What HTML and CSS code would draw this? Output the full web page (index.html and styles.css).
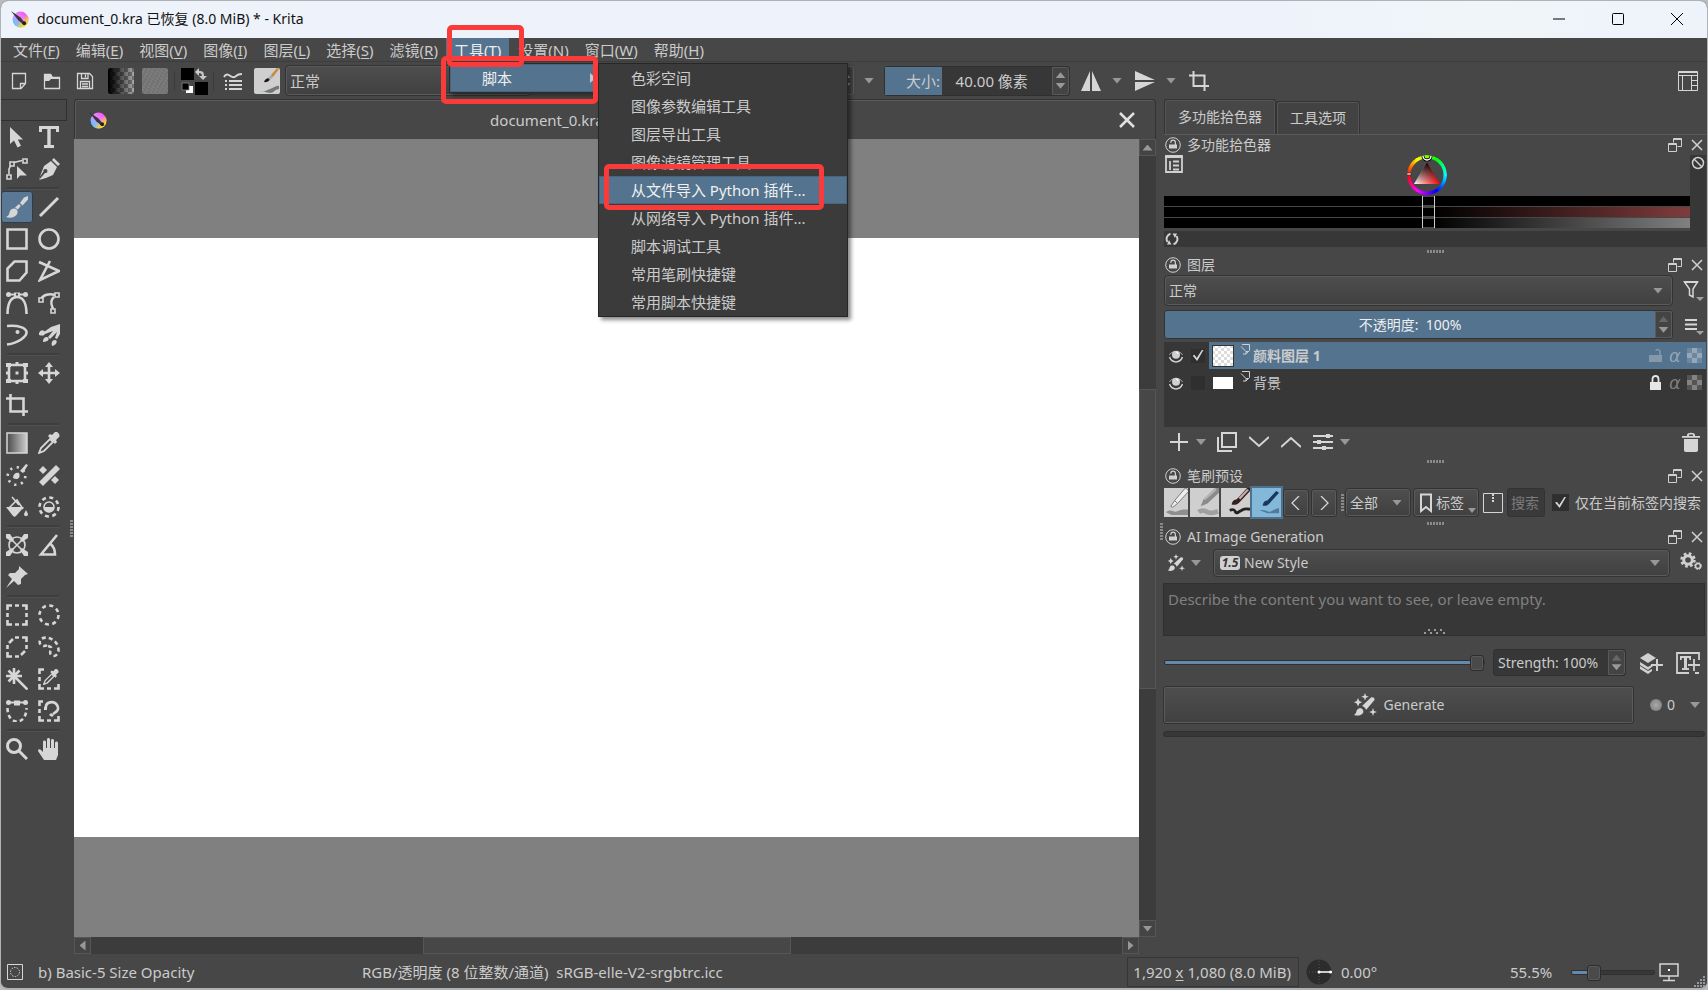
FILE: index.html
```html
<!DOCTYPE html>
<html lang="zh-CN">
<head>
<meta charset="utf-8">
<title>document_0.kra 已恢复 (8.0 MiB) * - Krita</title>
<link rel="stylesheet" href="styles.css">
</head>
<body>
<svg class="sprite" aria-hidden="true">
  <defs>
    <linearGradient id="gk1" x1="1" y1="0" x2="0" y2="1"><stop offset="0" stop-color="#ff3df2"/><stop offset=".5" stop-color="#e78cff"/><stop offset="1" stop-color="#19e3ff"/></linearGradient>
    <linearGradient id="gk2" x1="0" y1="0" x2="1" y2="1"><stop offset=".5" stop-color="#ffe600" stop-opacity="0"/><stop offset=".85" stop-color="#ffe600"/></linearGradient>
    <linearGradient id="gfade"><stop offset="0" stop-color="#4a4a4a"/><stop offset="1" stop-color="#cfcfcf"/></linearGradient>
    <linearGradient id="gblack"><stop offset="0" stop-color="#000"/><stop offset=".2" stop-color="#000" stop-opacity=".85"/><stop offset="1" stop-color="#000" stop-opacity="0"/></linearGradient>
    <linearGradient id="gtri1"><stop offset="0" stop-color="#fff"/><stop offset="1" stop-color="#f00"/></linearGradient>
    <linearGradient id="gtri2" x1="0" y1="0" x2="0" y2="1"><stop offset="0" stop-color="#000"/><stop offset="1" stop-color="#000" stop-opacity="0"/></linearGradient>
    <pattern id="pcheck" width="8" height="8" patternUnits="userSpaceOnUse"><rect width="8" height="8" fill="#a8a8a8"/><path d="M0 0h4v4H0zM4 4h4v4H4z" fill="#727272"/></pattern>
    <pattern id="plight" width="6" height="6" patternUnits="userSpaceOnUse"><rect width="6" height="6" fill="#fff"/><path d="M0 0h3v3H0zM3 3h3v3H3z" fill="#dcdcdc"/></pattern>
  </defs>
  <symbol id="krita" viewBox="0 0 17 17"><circle cx="9" cy="9" r="7.500" fill="url(#gk1)"/><circle cx="9" cy="9" r="7.500" fill="url(#gk2)"/><path d="M0 1l9 6 4 5-1.500 1.500L7 10z" fill="#3b3540"/><circle cx="12.500" cy="12.500" r="1.800" fill="#222"/></symbol>
  <symbol id="lock" viewBox="0 0 16 16"><circle cx="8" cy="8" r="7.300" fill="none" stroke="#d0d0d0"/><path d="M4 7.500h8v4H4z" fill="#d0d0d0"/><path d="M5.800 5.800V5.500a2.300 2.300 0 0 1 4.600 0V8" fill="none" stroke="#d0d0d0" stroke-width="1.200"/></symbol>
  <symbol id="float" viewBox="0 0 14 14"><path d="M5.500 4.500v-4h8v8h-4M5 1.500h9M.5 5.500h8v8h-8zM0 6.500h9" fill="none" stroke="#d0d0d0"/></symbol>
  <symbol id="close" viewBox="0 0 12 12"><path d="M1 1l10 10M11 1L1 11" fill="none" stroke="#d0d0d0" stroke-width="1.500"/></symbol>
  <symbol id="brush" viewBox="0 0 22 22"><path d="M0 21c3-1 3-3 4-6 1-2.500 5-3.500 7-1 1.500 2.500 0 5-2.500 6.500C6 22 2.500 22 0 21zM9 11.500l4-3.500 1.800 2-3 3.500zM14 7l4-5.500 4-1.500v3.500L16.500 9.500z" fill="#d6d6d6"/></symbol>
  <symbol id="picker" viewBox="0 0 22 22"><path d="M1 21l2-5L12 7l3 3-9 9z" fill="none" stroke="#d6d6d6" stroke-width="1.800"/><path d="M10 4l2-2 2 1 3-3c2-1 5 2 4.500 4.500l-3.500 3.500 1 2-2 2z" fill="#d6d6d6"/></symbol>
  <symbol id="wand" viewBox="0 0 24 24"><path d="M1 22c2-1 2-3 3-5 1.500-2.500 5-2 6 0s0 4-2.500 5c-2 .800-4.500.600-6.500 0zM9 13l9-8.500c2-1 4 .500 3.500 2.500L13 17c-.500-2-2-3.500-4-4zM12 0l1 2.800 2.800 1-2.800 1L12 7.500l-1-2.700-2.800-1 2.800-1zM5 5l1.300 3L9 9.300l-2.700 1.200L5 13.500l-1.200-3L1 9.300 3.800 8zM20 15l1 3 3 1-3 1-1 3-1-3-3-1 3-1z" fill="#d6d6d6"/></symbol>
  <symbol id="node" viewBox="0 0 10 11"><path d="M2 .5h7.500v6l-3.500 3.500H3M1 2.500l5 5M6 10V7.500h3" fill="none" stroke="#d0d0d0"/></symbol>
  <symbol id="eye" viewBox="0 0 14 14"><path d="M.5 6C2 1.500 12 1.500 13.500 6" fill="none" stroke="#aaa"/><path d="M.5 8C3 14.500 11 14.500 13.500 8" fill="none" stroke="#d0d0d0" stroke-width="1.500"/><circle cx="7" cy="5.800" r="4" fill="#d0d0d0"/><path d="M7 3a2 2 0 0 1 2 2" stroke="#fff" fill="none"/></symbol>
  <symbol id="checks" viewBox="0 0 15 15"><path d="M0 0h5v5H0zM10 0h5v5h-5zM5 5h5v5H5zM0 10h5v5H0zM10 10h5v5h-5z" fill="#fff" opacity=".15"/><path d="M5 0h5v5H5zM0 5h5v5H0zM10 5h5v5h-5zM5 10h5v5H5z" fill="#fff" opacity=".38"/></symbol>
</svg>

<div class="window">
  <header class="titlebar">
    <svg class="i18"><use href="#krita"/></svg>
    <h1 class="title">document_0.kra 已恢复 (8.0 MiB) * - Krita</h1>
    <div class="winbtns">
      <button class="winbtn" aria-label="最小化"><svg class="i12" viewBox="0 0 12 12"><path d="M0 6h12" stroke="#000"/></svg></button>
      <button class="winbtn" aria-label="最大化"><svg class="i12" viewBox="0 0 12 12"><rect x=".5" y=".5" width="11" height="11" rx="1" fill="none" stroke="#000"/></svg></button>
      <button class="winbtn" aria-label="关闭"><svg class="i12" viewBox="0 0 12 12"><path d="M0 0l12 12M12 0L0 12" stroke="#000"/></svg></button>
    </div>
  </header>

  <nav class="menubar">
    <button class="menu">文件(<u>F</u>)</button>
    <button class="menu">编辑(<u>E</u>)</button>
    <button class="menu">视图(<u>V</u>)</button>
    <button class="menu">图像(<u>I</u>)</button>
    <button class="menu">图层(<u>L</u>)</button>
    <button class="menu">选择(<u>S</u>)</button>
    <button class="menu">滤镜(<u>R</u>)</button>
    <div class="menuwrap">
      <button class="menu open">工具(<u>T</u>)</button>
      <div class="popup">
        <button class="popitem on">脚本<span class="subarrow"></span></button>
        <div class="submenu">
          <button class="popitem">色彩空间</button>
          <button class="popitem">图像参数编辑工具</button>
          <button class="popitem">图层导出工具</button>
          <button class="popitem">图像滤镜管理工具</button>
          <button class="popitem on">从文件导入 Python 插件...</button>
          <button class="popitem">从网络导入 Python 插件...</button>
          <button class="popitem">脚本调试工具</button>
          <button class="popitem">常用笔刷快捷键</button>
          <button class="popitem">常用脚本快捷键</button>
        </div>
      </div>
    </div>
    <button class="menu">设置(<u>N</u>)</button>
    <button class="menu">窗口(<u>W</u>)</button>
    <button class="menu">帮助(<u>H</u>)</button>
  </nav>

  <div class="toolbar">
    <div class="filebtns">
      <button class="btn" aria-label="新建"><svg class="i18" viewBox="0 0 18 18"><path d="M2.500 1.500h13v10l-4.500 5h-8.500zM10.500 16v-4.500H15" fill="none" stroke="#d6d6d6" stroke-width="1.300"/></svg></button>
      <button class="btn" aria-label="打开"><svg class="i18" viewBox="0 0 18 18"><path d="M1.500 16.500v-14h6l2 3h7v11z" fill="none" stroke="#d6d6d6" stroke-width="1.300"/><path d="M1 2h7l1.500 3H17v2H8L6 9H1z" fill="#d6d6d6"/></svg></button>
      <button class="btn" aria-label="保存"><svg class="i18" viewBox="0 0 18 18"><path d="M1.500 1.500h12l3 3v12h-15zM4.500 16V9.500h9V16M5.500 2v4.500h6.500V2M9.500 2.500v3M6 12h6M6 14.500h6" fill="none" stroke="#d6d6d6" stroke-width="1.300"/></svg></button>
    </div>
    <button class="btn" aria-label="渐变"><svg class="i26" viewBox="0 0 26 26"><rect width="26" height="26" rx="2" fill="url(#pcheck)"/><rect width="26" height="26" rx="2" fill="url(#gblack)"/></svg></button>
    <button class="btn texture" aria-label="图案"></button>
    <i class="vsep"></i>
    <button class="btn" aria-label="前景色和背景色"><svg class="i26" viewBox="0 0 26 26"><path d="M0 0h13v12H0zM14 14h13v13H14z" fill="#000"/><path d="M5 18h7v7H5z" fill="#fff"/><path d="M1 15h7v7H1z" fill="#000" stroke="#888" stroke-width=".8"/><path d="M14 4l4-4v3c4 0 5 1 5 5h3l-4 4-4-4h3c0-2-1-3-3-3v3z" fill="#c8c8c8"/></svg></button>
    <i class="vsep"></i>
    <button class="btn" aria-label="笔刷编辑器"><svg class="i20" viewBox="0 0 20 20"><path d="M1 6c4-7 8 4 12-1 2-2 3-2 6-2" fill="none" stroke="#d6d6d6" stroke-width="2"/><path d="M2 10h2M6 10h13M2 14h2M6 14h13M2 18h2M6 18h13" stroke="#d6d6d6" stroke-width="2"/></svg></button>
    <button class="btn" aria-label="笔刷预设"><svg class="i26" viewBox="0 0 26 26"><rect width="26" height="26" rx="2" fill="#cfcfcf"/><path d="M6 23c5 2 6-1 10-2s6-4 9-3v3c-4 0-5 4-9 4z" fill="#777"/><path d="M10 14c1-3 3-4 5-4l1 1.500c-1 2-4 3-6 2.500z" fill="#2b1512"/><path d="M14 10l3-3 2 2-3 3z" fill="#aaa"/><path d="M17 7l6-7 2 1-6 8z" fill="#c98a3c"/></svg></button>
    <label class="combo blend"><select aria-label="混合模式"><option>正常</option></select></label>
    <span class="spin hiddenspin"><i class="up"></i><i class="dn"></i></span>
    <i class="dd"></i>
    <div class="sizebox"><div class="sizefill" style="width:31%"></div><input class="sizeinput" aria-label="大小" value="大小:&nbsp;&nbsp;&nbsp;&nbsp;40.00 像素"><span class="spin"><i class="up"></i><i class="dn"></i></span></div>
    <button class="btn" aria-label="水平镜像"><svg class="i20" viewBox="0 0 20 20"><path d="M9 0v20H0zM11 0v20h9z" fill="#d6d6d6"/></svg></button>
    <i class="dd"></i>
    <button class="btn" aria-label="垂直镜像"><svg class="i20" viewBox="0 0 20 20"><path d="M0 0v9h20zM0 11v9l20-9z" fill="#d6d6d6"/></svg></button>
    <i class="dd"></i>
    <button class="btn" aria-label="环绕模式"><svg class="i20" viewBox="0 0 20 20"><path d="M4.500 0v15H20M0 4.500h15.500V20" fill="none" stroke="#d6d6d6" stroke-width="2"/></svg></button>
    <button class="btn last" aria-label="工作区"><svg class="i20" viewBox="0 0 20 20"><path d="M.5.5h19v19H.5zM0 1.500h20M0 4.500h20M4.500 4v16M13.500 4v16M13.500 9.500H20M13.500 14.500H20" fill="none" stroke="#d6d6d6"/></svg></button>
  </div>

  <main class="main">
    <aside class="toolbox">
      <div class="toolhead"></div>
      <div class="group">
        <button class="tool" aria-label="选择形状"><svg viewBox="0 0 22 22"><path class="f" d="M4 1v17l4-3.500 3.500 7 3.500-1.800-3.200-6.200H17z"/></svg></button>
        <button class="tool" aria-label="文本"><svg viewBox="0 0 22 22"><path class="f" d="M1 0h20v6h-3V3h-5.300v16H16v3H6v-3h3.300V3H4v3H1z"/></svg></button>
        <button class="tool" aria-label="编辑形状"><svg viewBox="0 0 22 22"><path class="s" d="M3 16v-5l2-4M8 4.500l8-2M1 17h4v4H1zM4 4h4v4H4zM17 1h4v4h-4z"/><path class="f" d="M11 8v13l3-3.500H21z"/></svg></button>
        <button class="tool" aria-label="书法"><svg viewBox="0 0 22 22"><path class="f" d="M1 21L6 8l7-5 6 6-4 8-7 3-7 2 6-7a2 2 0 1 0-1.500-1.500L1 20zM14 2l1.800-2L22 6l-2 2z"/></svg></button>
      </div>
      <div class="group">
        <button class="tool sel" aria-label="笔刷"><svg><use href="#brush"/></svg></button>
        <button class="tool" aria-label="直线"><svg viewBox="0 0 22 22"><path class="s3" d="M2 20L20 2"/></svg></button>
        <button class="tool" aria-label="矩形"><svg viewBox="0 0 22 22"><path class="s2" d="M1.500 1.500h19v19h-19z"/></svg></button>
        <button class="tool" aria-label="椭圆"><svg viewBox="0 0 22 22"><circle class="s2" cx="11" cy="11" r="9.500"/></svg></button>
        <button class="tool" aria-label="多边形"><svg viewBox="0 0 22 22"><path class="s2" d="M8.500 1.500h12v11l-7 8h-12v-12z"/></svg></button>
        <button class="tool" aria-label="折线"><svg viewBox="0 0 22 22"><path class="s2" d="M1 2l20 9L2 20 12 1"/></svg></button>
        <button class="tool" aria-label="贝塞尔曲线"><svg viewBox="0 0 22 22"><path class="s2" d="M1.500 22C1.500 8 7 5 11 5s9.500 3 9.500 17"/><path class="f" d="M3 1.500h5v-1h6v1h5v2h-5v2H8v-2H3z"/><circle class="f" cx="2.500" cy="2.500" r="2.500"/><circle class="f" cx="19.500" cy="2.500" r="2.500"/><path d="M10 1.500h2v2h-2z" fill="#474747"/></svg></button>
        <button class="tool" aria-label="手绘路径"><svg viewBox="0 0 22 22"><path class="s2" d="M3 7c2-4 8-6 14-4M16 5c-5 4-2 9-1 12"/><path class="s k" d="M1 6h4v4H1zM17 1h4v4h-4zM13 17h4v4h-4z"/></svg></button>
        <button class="tool" aria-label="动态笔刷"><svg viewBox="0 0 22 22"><path class="s2" d="M1 2c12-1 19 2 19.500 6S13 19 1 20.500"/><circle class="f" cx="11.500" cy="8" r="2"/></svg></button>
        <button class="tool" aria-label="多路笔刷"><svg viewBox="0 0 22 22"><path class="f" d="M22 0v10l-3 5-2-1 2-6-7 7-2-2 5-6-8 3-1-2 7-5zM1 9c2-4 6-3 6 0s-3 3-6 2zM5 18c0-4 2-5 4-5 3 1 2 5-4 5zM14 22c-1-3 0-6 3-6s2 5-3 6z"/></svg></button>
      </div>
      <div class="group">
        <button class="tool" aria-label="变形"><svg viewBox="0 0 22 22"><path class="s2" d="M3 3h16v16H3z"/><path class="f" d="M0 1h5v4H0zM17 1h5v4h-5zM0 17h5v4H0zM17 17h5v4h-5zM9.500 0h3v4h-3zM9.500 18h3v4h-3zM0 9.500h4v3H0zM18 9.500h4v3h-4zM9.500 9.500h3v3h-3z"/></svg></button>
        <button class="tool" aria-label="移动"><svg viewBox="0 0 22 22"><path class="s2" d="M11 3v16M3 11h16"/><path class="f" d="M11 0l4 5H7zM11 22l4-5H7zM0 11l5-4v8zM22 11l-5-4v8z"/></svg></button>
        <button class="tool" aria-label="裁剪"><svg viewBox="0 0 22 22"><path class="s2" d="M4.500 0v17.500H22M0 4.500h17.500V22"/></svg></button>
      </div>
      <div class="group">
        <button class="tool" aria-label="渐变"><svg viewBox="0 0 22 22"><rect x="1" y="1" width="20" height="20" fill="url(#gfade)" stroke="#d6d6d6" stroke-width="1.500"/></svg></button>
        <button class="tool" aria-label="拾色器"><svg><use href="#picker"/></svg></button>
        <button class="tool" aria-label="智能填色"><svg viewBox="0 0 22 22"><path class="f" d="M7 14c0-4 3-6 6-5 2 4-1 8-6 5zM14 7l6-7 2 1-5 8z"/><circle class="s2" cx="10.500" cy="12" r="8.800" stroke-dasharray="2.300 4.600"/></svg></button>
        <button class="tool" aria-label="智能补丁"><svg viewBox="0 0 22 22"><path class="f" d="M1 18L18 1l4 4L5 22zM1 6l4-4 4 4-4 4zM13 16l4-4 4 4-4 4z"/></svg></button>
        <button class="tool" aria-label="填充"><svg viewBox="0 0 22 22"><path class="s" d="M3 12l8-8 6 9M6 1l7 8"/><path class="f" d="M0 11h18l-8 9c-1 1-2 1-3 0zM18 18l2-4 2 4c0 3-4 3-4 0z"/></svg></button>
        <button class="tool" aria-label="包围填充"><svg viewBox="0 0 22 22"><circle class="s2" cx="11" cy="11" r="9.500" stroke-dasharray="4 3.460"/><circle class="s" cx="11" cy="11" r="5"/><path class="f" d="M6 11h10c0 7-10 7-10 0z"/></svg></button>
      </div>
      <div class="group">
        <button class="tool" aria-label="辅助尺"><svg viewBox="0 0 22 22"><path class="s" d="M1 1l20 20M21 1L1 21"/><circle class="s" cx="11" cy="11" r="8"/><path class="f" d="M0 0h4l4 6-2 2-6-4zM22 0h-4l-4 6 2 2 6-4zM0 22h4l4-6-2-2-6 4zM22 22h-4l-4-6 2-2 6 4z"/></svg></button>
        <button class="tool" aria-label="测量"><svg viewBox="0 0 22 22"><path class="s2" d="M19 1L3 20.500h14c0-5-1-8-5-11"/></svg></button>
        <button class="tool" aria-label="参考图像"><svg viewBox="0 0 22 22"><path class="f" d="M13 0l9 8-3 1-4 4v5l-3 1-4-4-8 7 6-9-4-4 2-2h5l4-4z"/></svg></button>
      </div>
      <div class="group">
        <button class="tool" aria-label="矩形选区"><svg viewBox="0 0 22 22"><path class="s2" d="M1.500 6V1.500H6M9 1.500h4M16 1.500h4.500V6M20.500 9v4M20.500 16v4.500H16M13 20.500H9M6 20.500H1.500V16M1.500 13V9"/></svg></button>
        <button class="tool" aria-label="椭圆选区"><svg viewBox="0 0 22 22"><circle class="s2" cx="11" cy="11" r="9.500" stroke-dasharray="4 3.460"/></svg></button>
        <button class="tool" aria-label="多边形选区"><svg viewBox="0 0 22 22"><path class="s2" d="M9 1.500h4M16 1.500h4.500V6M20.500 9v4M19 15l-4 4M13 20.500H9M6 20.500H1.500V16M1.500 13V9M3 7l4-4"/></svg></button>
        <button class="tool" aria-label="手绘选区"><svg viewBox="0 0 22 22"><path class="s2" stroke-dasharray="4 3" d="M9 9c-4 3-10-1-6-6 6-4 18 1 17.500 12-2 8-10 5-8 0 3-4-1-5-4-5"/></svg></button>
        <button class="tool" aria-label="相似选区"><svg viewBox="0 0 22 22"><path class="s2" d="M8 0v16M0 8h16M2.500 2.500l19 19M13.500 2.500l-11 11"/></svg></button>
        <button class="tool" aria-label="取色选区"><svg viewBox="0 0 22 22"><path class="s2" d="M1.500 6V1.500H6M1.500 13V9M6 20.500H1.500V16M9 20.500h4M16 20.500h4.500V16"/><use href="#picker" x="5" y="1" width="16" height="16"/></svg></button>
        <button class="tool" aria-label="贝塞尔选区"><svg viewBox="0 0 22 22"><path class="f" d="M3 1.500h5v-1h6v1h5v2h-5v2H8v-2H3z"/><circle class="f" cx="2.500" cy="2.500" r="2.500"/><circle class="f" cx="19.500" cy="2.500" r="2.500"/><path class="s2" stroke-dasharray="4 3" d="M1.500 8c0 18 19 18 19 0"/></svg></button>
        <button class="tool" aria-label="磁性选区"><svg viewBox="0 0 22 22"><path class="s2" d="M1.500 6V1.500H5M1.500 13V9M6 20.500H1.500V16M9 20.500h4M16 20.500h4.500V16M8 8c-1-6 8-8 11-3s-1 7-4 9"/><path class="f" d="M6 7l3-1v4H6zM13 13l3 2-2 2-3-2z"/></svg></button>
      </div>
      <div class="group">
        <button class="tool" aria-label="缩放"><svg viewBox="0 0 22 22"><circle class="s3" cx="8" cy="8" r="6.500"/><path class="s3" d="M13 13l8 8"/></svg></button>
        <button class="tool" aria-label="平移"><svg viewBox="0 0 22 22"><path class="f" d="M6 22L0 13c0-2 2-2 3-1l2 2V4c0-2 3-2 3 0v6h1V1.500c0-2 3-2 3 0V10h1V2.500c0-2 3-2 3 0V10h1V5c0-2 3-2 3 0v12l-2 5z"/></svg></button>
      </div>
      <div class="vgrip leftgrip"></div>
    </aside>

    <section class="center">
      <div class="doctab">
        <svg class="i18"><use href="#krita"/></svg>
        <span class="docname">document_0.kra 已恢复 (8.0 MiB) *</span>
        <button class="btn" aria-label="关闭文档"><svg class="i16" viewBox="0 0 16 16"><path d="M1 1l14 14M15 1L1 15" stroke="#e0e0e0" stroke-width="2.500"/></svg></button>
      </div>
      <div class="view">
        <div class="canvas"><div class="page"></div></div>
        <div class="vbar"><button class="sb" aria-label="上"><i class="up"></i></button><div class="vtrack"><div class="vthumb"></div></div><button class="sb" aria-label="下"><i class="dn"></i></button></div>
        <div class="hbar"><button class="sb" aria-label="左"><i class="lf"></i></button><div class="htrack"><div class="hthumb"></div></div><button class="sb" aria-label="右"><i class="rt"></i></button></div>
      </div>
    </section>

    <aside class="docks">
      <div class="vgrip dockgrip"></div>
      <div class="tabs"><button class="tab active">多功能拾色器</button><button class="tab">工具选项</button></div>

      <section class="dock">
        <div class="dtitle"><svg class="i16"><use href="#lock"/></svg><h2>多功能拾色器</h2><svg class="i14"><use href="#float"/></svg><svg class="i12"><use href="#close"/></svg></div>
        <div class="picker">
          <div class="pickmain">
            <div class="wheelrow">
              <button class="btn" aria-label="设置"><svg class="i18" viewBox="0 0 18 18"><path d="M1 1h16v16H1zM0 2h18M5 6v9M8 6.500h6M8 10.500h6M8 14.500h6" fill="none" stroke="#d0d0d0" stroke-width="1.800"/></svg></button>
              <div class="wheel"><div class="ring"></div><svg class="tri" viewBox="0 0 40 40"><path d="M20 7l13 22H7z" fill="url(#gtri1)"/><path d="M20 7l13 22H7z" fill="url(#gtri2)"/><path d="M16 1a4 4 0 1 0 8 0" fill="none" stroke="#000" stroke-width="3"/><path d="M16 1a4 4 0 1 0 8 0" fill="none" stroke="#fff" stroke-width="1.500"/><path d="M0 18h4v2H0z" fill="#ddd" stroke="#222" stroke-width=".5"/></svg></div>
            </div>
            <div class="bars"><div class="cbar"></div><div class="cbar red"></div><div class="cbar gray"></div></div>
            <div class="refresh"><svg class="i14" viewBox="0 0 14 14"><path d="M5.500 1.700A5.500 5.500 0 0 0 2.500 10M8.500 12.300A5.500 5.500 0 0 0 11.500 4" fill="none" stroke="#d0d0d0" stroke-width="2"/><path d="M2 12.500h4.500L4 8zM12 1.500H7.500L10 6z" fill="#d0d0d0"/></svg></div>
          </div>
          <div class="pickside"><svg class="i14" viewBox="0 0 14 14"><circle cx="7" cy="7" r="5.500" fill="none" stroke="#d0d0d0" stroke-width="1.500"/><path d="M3 3l8 8" stroke="#d0d0d0" stroke-width="1.500"/></svg></div>
        </div>
      </section>
      <div class="hgrip tight"></div>

      <section class="dock">
        <div class="dtitle"><svg class="i16"><use href="#lock"/></svg><h2>图层</h2><svg class="i14"><use href="#float"/></svg><svg class="i12"><use href="#close"/></svg></div>
        <div class="lrow"><label class="combo grow tall"><select aria-label="图层混合模式"><option>正常</option></select></label><button class="btn side" aria-label="筛选"><svg class="i22" viewBox="0 0 22 22"><path d="M1.500 2h13L10 9v8l-3.500-2V9z" fill="none" stroke="#d6d6d6" stroke-width="1.500"/><path d="M1 2h14" stroke="#d6d6d6" stroke-width="2"/><path d="M13 17h8l-4 4z" fill="#a0a0a0"/></svg></button></div>
        <div class="lrow"><div class="opacity"><span>不透明度:&nbsp; 100%</span><span class="spin"><i class="up dim"></i><i class="dn"></i></span></div><button class="btn side" aria-label="图层菜单"><svg class="i22" viewBox="0 0 22 22"><path d="M2 6h12M2 10.500h12M2 15h12" stroke="#d6d6d6" stroke-width="2"/><path d="M13 17h8l-4 4z" fill="#a0a0a0"/></svg></button></div>
        <div class="layers">
          <div class="layer">
            <svg class="i14"><use href="#eye"/></svg>
            <input class="tick small" type="checkbox" checked aria-label="选中颜料图层 1">
            <div class="lbody on"><svg class="thumb" viewBox="0 0 22 22"><rect x=".5" y=".5" width="21" height="21" fill="url(#plight)" stroke="#333"/></svg><svg class="mini"><use href="#node"/></svg><span class="lname">颜料图层 1</span>
              <svg class="i15 fade" viewBox="0 0 15 15"><path d="M1 7h13v7H1z" fill="#d0d0d0"/><path d="M12 8V4c0-3-4-3-4-1" fill="none" stroke="#d0d0d0" stroke-width="1.500"/></svg><i class="alpha">α</i><svg class="i15"><use href="#checks"/></svg></div>
          </div>
          <div class="layer">
            <svg class="i14"><use href="#eye"/></svg>
            <input class="tick small" type="checkbox" aria-label="选中背景">
            <div class="lbody"><svg class="thumb" viewBox="0 0 22 22"><path d="M1 5h20v12H1z" fill="#fff"/></svg><svg class="mini"><use href="#node"/></svg><span class="lname">背景</span>
              <svg class="i15" viewBox="0 0 15 15"><path d="M2 7h11v8H2z" fill="#e6e6e6"/><path d="M4.500 8V4c0-4 6-4 6 0v4" fill="none" stroke="#e6e6e6" stroke-width="1.800"/></svg><i class="alpha">α</i><svg class="i15"><use href="#checks"/></svg></div>
          </div>
        </div>
        <div class="lactions">
          <button class="btn" aria-label="添加图层"><svg class="i20" viewBox="0 0 20 20"><path d="M10 1v18M1 10h18" stroke="#d6d6d6" stroke-width="2"/></svg></button><i class="dd"></i>
          <button class="btn" aria-label="复制图层"><svg class="i20" viewBox="0 0 20 20"><path d="M5 1h14v14H5zM1 5v14h14" fill="none" stroke="#d6d6d6" stroke-width="2"/></svg></button>
          <button class="btn" aria-label="下移"><svg class="i20" viewBox="0 0 20 20"><path d="M0 5l10 9 10-9" fill="none" stroke="#d6d6d6" stroke-width="2"/></svg></button>
          <button class="btn" aria-label="上移"><svg class="i20" viewBox="0 0 20 20"><path d="M0 15l10-9 10 9" fill="none" stroke="#d6d6d6" stroke-width="2"/></svg></button>
          <button class="btn" aria-label="图层属性"><svg class="i20" viewBox="0 0 20 20"><path d="M0 4h20M0 10h20M0 16h20" stroke="#d6d6d6" stroke-width="2"/><path d="M13 2h4v4h-4zM4 8h4v4H4zM9 14h4v4H9z" fill="#d6d6d6"/></svg></button><i class="dd"></i>
          <button class="btn last" aria-label="删除图层"><svg class="i20" viewBox="0 0 20 20"><path d="M3 7h14v11c0 1-.500 2-2 2H5c-1.500 0-2-1-2-2zM1 4h18v1.800H1zM6 3c0-3 8-3 8 0v1h-2V2.500H8V4H6z" fill="#d6d6d6"/></svg></button>
        </div>
      </section>
      <div class="hgrip"></div>

      <section class="dock">
        <div class="dtitle"><svg class="i16"><use href="#lock"/></svg><h2>笔刷预设</h2><svg class="i14"><use href="#float"/></svg><svg class="i12"><use href="#close"/></svg></div>
        <div class="presets">
          <button class="preset" aria-label="橡皮擦"><svg viewBox="0 0 30 30"><path d="M2 25c7-4 7 1 12-1s8-2 16-1v5H8z" fill="#8e8e8e"/><path d="M7 19l4-6L22 0l4 3-12 13-5 4z" fill="#ededed" stroke="#777"/><path d="M11 13l3 3" stroke="#777"/></svg></button>
          <button class="preset" aria-label="铅笔"><svg viewBox="0 0 30 30"><path d="M9 25c8-6 6 5 20-1" fill="none" stroke="#a0a0a0" stroke-width="5"/><path d="M11 19l3-7L26 0h4v5L18 16z" fill="#8a8a8a"/><path d="M15 12L27 1" stroke="#b5b5b5" stroke-width="2"/></svg></button>
          <button class="preset" aria-label="墨水"><svg viewBox="0 0 30 30"><path d="M9 23c8-3 4 5 9 2s6-4 12-3" fill="none" stroke="#222" stroke-width="3"/><path d="M11 17c1-4 3-5 5-5L27 0h3v3L19 15c-2 2-5 3-8 2z" fill="#35201f"/><path d="M18 10l9-9 2 1-9 10z" fill="#bfa9a9"/></svg></button>
          <button class="preset blue" aria-label="b) Basic-5 Size Opacity"><svg viewBox="0 0 30 30"><path d="M8 23c7-1 8 3 12 1s5-3 8-3v5H16z" fill="#54799f"/><path d="M11 18c1-4 3-5 5-5l9-10 3 2-10 11c-2 2-4 3-7 2z" fill="#1b3564"/></svg></button>
          <button class="box nav" aria-label="上一个"><svg class="i14" viewBox="0 0 14 14"><path d="M10 0L3 7l7 7" fill="none" stroke="#d6d6d6" stroke-width="1.300"/></svg></button>
          <button class="box nav" aria-label="下一个"><svg class="i14" viewBox="0 0 14 14"><path d="M4 0l7 7-7 7" fill="none" stroke="#d6d6d6" stroke-width="1.300"/></svg></button>
          <i class="vgrip"></i>
          <label class="combo tagcombo"><select aria-label="标签"><option>全部</option></select></label>
          <button class="box tagbtn"><svg width="14" height="20" viewBox="0 0 14 20"><path d="M2 1.500h10V18l-5-4-5 4z" fill="none" stroke="#d6d6d6" stroke-width="2"/></svg>标签<i class="dd"></i></button>
          <svg class="i20" viewBox="0 0 20 20"><path d="M.5.5h19v19H.5z" fill="none" stroke="#d6d6d6"/><path d="M10 1v9" stroke="#d6d6d6" stroke-width="2" stroke-dasharray="2 1"/></svg>
          <input class="search" type="text" placeholder="搜索" aria-label="搜索">
          <label class="only"><input class="tick" type="checkbox" checked>仅在当前标签内搜索</label>
        </div>
      </section>
      <div class="hgrip tight"></div>

      <section class="dock">
        <div class="dtitle"><svg class="i16"><use href="#lock"/></svg><h2>AI Image Generation</h2><svg class="i14"><use href="#float"/></svg><svg class="i12"><use href="#close"/></svg></div>
        <div class="airow">
          <button class="btn" aria-label="工作区"><svg class="i18"><use href="#wand"/></svg></button><i class="dd"></i>
          <label class="combo grow style"><b class="badge">1.5</b><select aria-label="样式"><option>New Style</option></select></label>
          <button class="btn side" aria-label="设置"><svg class="i22" viewBox="0 0 22 22"><circle cx="8" cy="8" r="4.300" fill="none" stroke="#d0d0d0" stroke-width="3"/><circle cx="8" cy="8" r="6.500" fill="none" stroke="#d0d0d0" stroke-width="2.500" stroke-dasharray="2.700 2.400"/><circle cx="18" cy="14" r="2.500" fill="none" stroke="#d0d0d0" stroke-width="1.500"/><circle cx="18" cy="14" r="3.500" fill="none" stroke="#d0d0d0" stroke-width="1" stroke-dasharray="1.400 1.400"/></svg></button>
        </div>
        <div class="promptbox"><textarea class="prompt" aria-label="Prompt" placeholder="Describe the content you want to see, or leave empty."></textarea><svg class="pgrip" viewBox="0 0 21 7"><path d="M0 4h2v2H0zM4 1h2v2H4zM6 4h2v2H6zM10 1h2v2h-2zM12 4h2v2h-2zM16 1h2v2h-2zM19 4h2v2h-2z" fill="#999"/></svg></div>
        <div class="strengthrow">
          <input class="slider strength" type="range" value="100" aria-label="Strength">
          <div class="numbox"><input aria-label="Strength value" value="Strength: 100%"><span class="spin"><i class="up dim"></i><i class="dn"></i></span></div>
          <button class="btn" aria-label="Add control layer"><svg class="i24" viewBox="0 0 24 24"><path d="M9 2l8 5-8 5-8-5zM1 11l8 5 5-3v2l-5 4-8-5zM1 15l8 5 4-2v2l-4 3-8-5zM17 8h2v5h5v2h-5v5h-2v-5h-5v-2h5z" fill="#d0d0d0"/></svg></button>
          <button class="btn" aria-label="Add text region"><svg class="i24" viewBox="0 0 24 24"><path d="M23 9V2H1v20h12M19 22h4M18 8v12M12 14h12" fill="none" stroke="#d0d0d0" stroke-width="1.800"/><path d="M4 5h11v4h-1.500l-.5-2h-2v10h2v2H6v-2h2V7H6l-.5 2H4z" fill="#d0d0d0"/></svg></button>
        </div>
        <div class="genrow">
          <button class="box generate"><svg class="i24"><use href="#wand"/></svg>Generate</button>
          <button class="queue"><i class="dot"></i>0<i class="dd"></i></button>
        </div>
        <div class="progress"></div>
      </section>
    </aside>
  </main>

  <footer class="status">
    <svg class="i16" viewBox="0 0 16 16"><path d="M.5.5h15v15H.5z" fill="none" stroke="#d6d6d6"/><circle cx="8" cy="8" r="4.500" fill="none" stroke="#d6d6d6" stroke-dasharray="1.500 1.300"/></svg>
    <span class="sname">b) Basic-5 Size Opacity</span>
    <span class="sprofile">RGB/透明度 (8 位整数/通道)&nbsp; sRGB-elle-V2-srgbtrc.icc</span>
    <button class="dims">1,920 <u>x</u> 1,080 (8.0 MiB)</button>
    <svg class="i26" viewBox="0 0 26 26"><circle cx="13" cy="13" r="12.500" fill="#2c2c2c"/><path d="M13 2v22M3 13h10" stroke="#555" stroke-dasharray="1 2"/><path d="M12 13h14" stroke="#fff" stroke-width="1.500"/><circle cx="13" cy="13" r="1.500" fill="#fff"/><circle cx="24.500" cy="13" r="1.500" fill="#fff"/></svg>
    <span class="angle">0.00°</span>
    <span class="zoomval">55.5%</span>
    <input class="slider zoom" type="range" value="22" aria-label="缩放">
    <svg class="i20" viewBox="0 0 20 20"><path d="M1 2h18v12H1zM10 14v4M4 18.500h12" fill="none" stroke="#d6d6d6" stroke-width="1.500"/><path d="M9 7h2v2H9z" fill="#fff"/></svg>
    <svg class="corner" viewBox="0 0 12 12"><path d="M9 0h2v2H9zM6 3h2v2H6zM9 3h2v2H9zM3 6h2v2H3zM6 6h2v2H6zM9 6h2v2H9zM0 9h2v2H0zM3 9h2v2H3zM6 9h2v2H6zM9 9h2v2H9z" fill="#999"/></svg>
  </footer>

  <div class="mark mark-menu"></div>
  <div class="mark mark-script"></div>
  <div class="mark mark-import"></div>
</div>
</body>
</html>
```
FILE: styles.css
```css
* { box-sizing: border-box; }
body { margin: 0; background: #b9bcbe; color: #cbcbcb; font: 15px/20px "Noto Sans", "Noto Sans CJK SC", sans-serif; }
button, input, select, textarea { font: inherit; color: inherit; margin: 0; padding: 0; border: 0; background: none; }
svg { display: block; flex: none; }
i { font-style: normal; }
u { text-underline-offset: 2px; text-decoration-thickness: 1px; }
.sprite { position: absolute; width: 0; height: 0; }
.i12 { width: 12px; height: 12px; }
.i14 { width: 14px; height: 14px; }
.i15 { width: 15px; height: 15px; }
.i16 { width: 16px; height: 16px; }
.i18 { width: 18px; height: 18px; }
.i20 { width: 20px; height: 20px; }
.i22 { width: 22px; height: 22px; }
.i24 { width: 24px; height: 24px; }
.i26 { width: 26px; height: 26px; overflow: visible; }

.window { position: relative; min-height: 100vh; display: flex; flex-direction: column; background: #474747; border: 1px solid #b0b3b5; border-bottom-width: 2px; border-radius: 8px; overflow: hidden; }
.titlebar { height: 37px; display: flex; align-items: center; padding: 0 0 2px 10px; background: linear-gradient(90deg, #eef3fb, #eef3fb 75%, #eff5f8 87%, #eef3fb); color: #111; }
.title { flex: 1; margin: 0 0 0 8px; font-size: 14px; font-weight: 400; line-height: 20px; }
.winbtns { display: flex; padding-right: 1px; }
.winbtn { width: 59px; height: 35px; display: grid; place-items: center; }

.menubar { height: 24px; display: flex; padding-left: 4px; border-bottom: 1px solid #3d3d3d; }
.menu { height: 23px; padding: 0 8px; white-space: nowrap; }
.menuwrap { position: relative; padding-right: 1px; }
.menu.open { background: #54738f; color: #eee; }
.popup { position: absolute; z-index: 5; left: 3px; top: 25px; width: 150px; background: #3b3b3b; border: 1px solid #2c2c2c; box-shadow: 3px 3px 4px rgba(0,0,0,.4); }
.submenu { position: absolute; left: 148px; top: -1px; width: 250px; background: #3b3b3b; border: 1px solid #262626; box-shadow: 3px 3px 4px rgba(0,0,0,.45); }
.popitem { display: flex; align-items: center; justify-content: space-between; width: 100%; height: 28px; padding: 0 2px 0 32px; text-align: left; white-space: nowrap; }
.popitem.on { background: #54738f; color: #f0f0f0; box-shadow: inset 0 0 0 1px #486580; }
.subarrow { width: 6px; height: 10px; background: #c0c8d0; clip-path: polygon(0 0, 100% 50%, 0 100%); }

.toolbar { height: 37px; display: flex; align-items: center; gap: 8px; padding: 0 6px 0 9px; }
.btn { display: grid; place-items: center; flex: none; }
.filebtns { display: flex; gap: 15px; margin-right: 6px; }
.texture { width: 26px; height: 26px; border-radius: 2px; background: repeating-linear-gradient(37deg, rgba(255,255,255,.05) 0 1px, transparent 1px 3px), repeating-linear-gradient(118deg, rgba(0,0,0,.08) 0 1px, transparent 1px 4px), #777; }
.vsep { width: 1px; height: 20px; margin: 0 -2px; background: #3a3a3a; }
.dd { width: 10px; height: 6px; flex: none; background: #989898; clip-path: polygon(0 0, 100% 0, 50% 100%); }
.last { margin-left: auto; }
.combo { position: relative; display: flex; align-items: center; height: 31px; min-width: 0; border: 1px solid #333; border-radius: 4px; background: linear-gradient(#4e4e4e, #404040); box-shadow: inset 0 0 0 1px #5a5a5a; }
.combo::after { content: ""; position: absolute; right: 8px; width: 10px; height: 6px; background: #989898; clip-path: polygon(0 0, 100% 0, 50% 100%); pointer-events: none; }
.combo select { appearance: none; width: 100%; height: 100%; padding: 0 4px; }
.blend { width: 246px; margin-left: -3px; }
.toolbar .i20 { margin: 0 3px; }
.spin { flex: none; width: 17px; height: 100%; display: flex; flex-direction: column; align-items: center; justify-content: space-evenly; border: 1px solid #5a5a5a; border-radius: 0 3px 3px 0; background: #444; }
.up, .dn { width: 10px; height: 6px; background: #989898; }
.up { clip-path: polygon(50% 0, 100% 100%, 0 100%); }
.dn { clip-path: polygon(0 0, 100% 0, 50% 100%); }
.dim { background: #666; }
.hiddenspin { height: 29px; margin: 0 2px 0 298px; }
.toolbar .dd { margin-right: 2px; }
.sizebox { position: relative; width: 186px; height: 30px; display: flex; background: #373737; border: 1px solid #303030; border-radius: 3px; }
.sizefill { position: absolute; left: 0; top: 0; bottom: 0; background: #54738f; }
.sizeinput { position: relative; flex: 1; min-width: 0; padding-left: 21px; }

.main { flex: 1; display: grid; grid-template-columns: 73px minmax(0, 1fr) 551px; }
.toolbox { position: relative; }
.toolhead { width: 66px; height: 22px; border: 1px solid #303030; border-left: 0; }
.group { display: flex; flex-wrap: wrap; width: 64px; }
.group + .group { margin-top: 6px; position: relative; }
.group + .group::before { content: ""; position: absolute; left: 6px; right: 6px; top: -4px; height: 2px; background: #3e3e3e; border-bottom: 1px solid #505050; }
.tool { width: 32px; height: 32px; display: grid; place-items: center; border-radius: 3px; }
.tool svg { width: 22px; height: 22px; }
.tool.sel { background: #5a7894; box-shadow: inset 0 0 0 1px #2f3d4a; }
.f { fill: #d6d6d6; }
.s, .s2, .s3 { fill: none; stroke: #d6d6d6; stroke-width: 1.6; }
.s2 { stroke-width: 2.6; }
.s3 { stroke-width: 3; }
.k { fill: #474747; }
.vgrip { width: 3px; height: 17px; background: repeating-linear-gradient(#8a8a8a 0 2px, transparent 2px 3px); }
.leftgrip { position: absolute; right: 1px; top: 421px; }

.center { display: flex; flex-direction: column; min-width: 0; }
.doctab { height: 40px; display: flex; align-items: center; padding: 0 20px 0 14px; border: 1px solid #333; border-bottom: 0; border-radius: 4px 4px 0 0; background: #474747; box-shadow: inset 1px 1px 0 #5a5a5a; }
.docname { flex: 1; text-align: center; padding-right: 6px; }
.view { flex: 1; display: grid; grid-template: minmax(0, 1fr) 17px / minmax(0, 1fr) 17px; }
.canvas { display: flex; padding: 99px 0 100px; background: #808080; }
.page { flex: 1; background: #fff; }
.vbar { display: flex; flex-direction: column; background: #3c3c3c; }
.hbar { display: flex; background: #3c3c3c; }
.sb { width: 17px; height: 17px; display: grid; place-items: center; border: 1px solid #565656; background: #444; }
.lf, .rt { width: 6px; height: 10px; background: #989898; }
.lf { clip-path: polygon(100% 0, 100% 100%, 0 50%); }
.rt { clip-path: polygon(0 0, 100% 50%, 0 100%); }
.vtrack { flex: 1; padding-top: 233px; }
.vthumb { height: 300px; border: 1px solid #565656; background: #474747; }
.htrack { flex: 1; padding-left: 332px; }
.hthumb { width: 368px; height: 17px; border: 1px solid #565656; background: #474747; }

.docks { position: relative; padding: 0 1px 0 8px; font-size: 14px; }
.dockgrip { position: absolute; left: 4px; top: 424px; }
.tabs { display: flex; align-items: flex-end; height: 36px; border-bottom: 1px solid #5a5a5a; }
.tab { height: 33px; padding: 0 13px; border: 1px solid #333; border-bottom: 0; border-radius: 3px 3px 0 0; background: #424242; box-shadow: inset 1px 1px 0 #555, inset -1px 0 0 #555; }
.tab.active { height: 35px; padding: 0 13px; background: #474747; }
.dtitle { height: 20px; display: flex; align-items: center; gap: 6px; padding: 0 3px 0 1px; }
.dtitle h2 { flex: 1; margin: 0; font-size: 14px; font-weight: 400; line-height: 20px; }
.dtitle .i12 { margin-left: 3px; }
.picker { display: flex; }
.pickmain { flex: 1; }
.wheelrow { height: 41px; display: flex; align-items: flex-start; padding: 0 1px; }
.wheel { position: relative; width: 40px; height: 40px; margin: 0 auto; }
.wheelrow .btn { margin-right: -18px; }
.ring { position: absolute; inset: 0; border-radius: 50%; background: conic-gradient(from 270deg, red, #ff0, #0f0, #0ff, #00f, #f0f, red); -webkit-mask: radial-gradient(circle, transparent 16px, #000 17px); mask: radial-gradient(circle, transparent 16px, #000 17px); }
.tri { position: absolute; inset: 0; width: 40px; height: 40px; }
.bars { position: relative; display: flex; flex-direction: column; gap: 1px; }
.bars::after { content: ""; position: absolute; left: calc(50% - 5px); width: 11px; top: 0; bottom: 0; border: solid #ccc; border-width: 0 1px; background: linear-gradient(#474747 1px, transparent 1px 9px, #474747 9px 12px, transparent 12px 20px, #474747 20px 23px, transparent 23px 31px, #474747 31px); }
.cbar { height: 10px; background: #000; }
.cbar.red { background: linear-gradient(90deg, #000 51%, #803c3c); }
.cbar.gray { background: linear-gradient(90deg, #000 51%, #808080); }
.refresh { height: 16px; margin-top: 3px; padding: 1px; background: #373737; }
.pickside { width: 16px; padding: 1px; background: #373737; }
.hgrip { height: 9px; display: grid; place-items: center; }
.hgrip::before { content: ""; width: 17px; height: 3px; background: repeating-linear-gradient(90deg, #8a8a8a 0 2px, transparent 2px 3px); }
.hgrip.tight { height: 8px; }
.lrow { display: flex; align-items: center; gap: 8px; margin-bottom: 4px; }
.grow { flex: 1; }
.tall { height: 31px; }
.tall::after { right: 9px; }
.side { width: 25px; }
.opacity { flex: 1; height: 29px; display: flex; border: 1px solid #333; border-radius: 3px; background: #54738f; color: #eee; }
.opacity span:first-child { flex: 1; text-align: center; line-height: 27px; }
.layers { height: 85px; margin-top: -1px; background: #373737; }
.layer { display: flex; align-items: center; gap: 8px; height: 27px; padding-left: 5px; }
.tick { appearance: none; flex: none; width: 17px; height: 17px; background: #2f2f2f; display: grid; place-items: center; }
.tick.small { width: 14px; height: 14px; }
.tick:checked::before { content: ""; width: 11px; height: 11px; background: #d6d6d6; clip-path: polygon(0 50%, 20% 45%, 38% 72%, 85% 0, 100% 0, 42% 100%); }
.lbody { flex: 1; align-self: stretch; display: flex; align-items: center; gap: 5px; margin-left: -4px; padding: 0 4px 0 3px; }
.lbody.on { background: #54738f; }
.lbody.on .lname { font-weight: 700; }
.thumb { width: 22px; height: 22px; }
.mini { width: 10px; height: 11px; margin-left: 1px; align-self: flex-start; margin-top: 2px; }
.lname { flex: 1; margin-left: -2px; }
.fade { opacity: .4; }
.alpha { font: italic 18px/20px "DejaVu Sans", sans-serif; color: #fff; opacity: .35; width: 14px; text-align: center; }
.lactions { display: flex; align-items: center; gap: 12px; height: 30px; padding: 0 5px; }
.lactions .dd { margin: 0 -1px 0 -5px; }
.presets { display: flex; align-items: center; gap: 2px; height: 33px; }
.preset { width: 29px; height: 29px; background: #cfcfcf; }
.preset:first-child { width: 24px; overflow: hidden; }
.preset.blue { background: #84b8d8; box-shadow: 0 0 0 2px #4d7190; }
.preset svg { width: 29px; height: 29px; }
.box { display: flex; align-items: center; justify-content: center; border: 1px solid #333; border-radius: 3px; background: linear-gradient(#4e4e4e, #414141); box-shadow: inset 0 0 0 1px #5a5a5a; }
.nav { width: 26px; height: 28px; }
.presets .vgrip { margin-left: 2px; }
.tagcombo { width: 66px; height: 29px; margin-left: -1px; }
.tagbtn { position: relative; width: 66px; height: 29px; gap: 3px; padding-right: 9px; }
.tagbtn .dd { position: absolute; right: 2px; bottom: 3px; width: 8px; height: 5px; }
.presets > .i20 { margin: 0 2px; }
.search { width: 38px; height: 29px; padding: 0 3px; border: 1px solid #333; border-radius: 3px; background: #3a3a3a; }
.search::placeholder { color: #7a7a7a; }
.only { display: flex; align-items: center; gap: 6px; margin-left: 5px; white-space: nowrap; }
.airow { display: flex; align-items: center; gap: 6px; height: 32px; padding: 0 3px; }
.style { height: 28px; margin-left: 6px; padding-left: 6px; }
.style::after { right: 9px; }
.airow .side { margin-left: 2px; }
.badge { width: 20px; height: 14px; border-radius: 3px; background: #d0d0d0; color: #333; font: italic 700 12px/14px "Noto Sans", sans-serif; text-align: center; flex: none; }
.promptbox { position: relative; margin: 4px 1px 0 -1px; font-size: 15px; }
.prompt { display: block; width: 100%; height: 53px; padding: 5px 4px; resize: none; border: 1px solid #303030; background: #373737; }
.prompt::placeholder { color: #808080; }
.pgrip { position: absolute; left: calc(50% - 10px); bottom: 1px; width: 21px; height: 7px; }
.strengthrow { display: flex; align-items: center; gap: 13px; height: 49px; padding: 4px 6px 0 0; }
.slider { appearance: none; height: 18px; }
.slider::-webkit-slider-runnable-track { height: 5px; border: 1px solid #303030; border-radius: 2px; background: #6389ae; }
.slider::-webkit-slider-thumb { appearance: none; width: 14px; height: 16px; margin-top: -6px; border: 1px solid #2c2c2c; border-radius: 3px; background: #4a4a4a; box-shadow: inset 0 0 0 1px #5a5a5a; }
.strength { flex: 1; min-width: 0; margin-right: -5px; }
.numbox { width: 133px; height: 27px; display: flex; border: 1px solid #303030; border-radius: 3px; background: #373737; }
.numbox input { flex: 1; min-width: 0; padding-left: 4px; }
.genrow { display: flex; align-items: center; height: 40px; margin-left: -1px; }
.generate { flex: 1; height: 38px; gap: 7px; }
.queue { width: 72px; display: flex; align-items: center; gap: 5px; padding: 0 6px 0 16px; }
.dot { width: 12px; height: 12px; border-radius: 50%; background: radial-gradient(circle, #aaa, #777); }
.queue .dd { margin-left: auto; }
.progress { height: 6px; margin: 6px 1px 0 -1px; border-radius: 3px; background: #373737; border: 1px solid #303030; }

.status { height: 34px; display: flex; align-items: center; padding: 2px 28px 0 6px; position: relative; }
.sname { margin-left: 15px; width: 324px; }
.sprofile { flex: 1; }
.dims { height: 30px; padding: 0 7px 0 5px; margin-right: 7px; border: 1px solid #363636; }
.angle { margin-left: 9px; width: 169px; }
.zoomval { width: 61px; }
.zoom { width: 84px; margin-right: 4px; }
.zoom::-webkit-slider-runnable-track { background: linear-gradient(90deg, #6389ae 22%, #373737 22%); }
.corner { position: absolute; right: 1px; bottom: 0; width: 12px; height: 12px; }

.mark { position: absolute; z-index: 10; border: 5px solid #fb3a3a; border-radius: 5px; pointer-events: none; }
.mark-menu { left: 446px; top: 24px; width: 77px; height: 42px; }
.mark-script { left: 440px; top: 55px; width: 157px; height: 48px; }
.mark-import { left: 603px; top: 163px; width: 220px; height: 46px; }
```
